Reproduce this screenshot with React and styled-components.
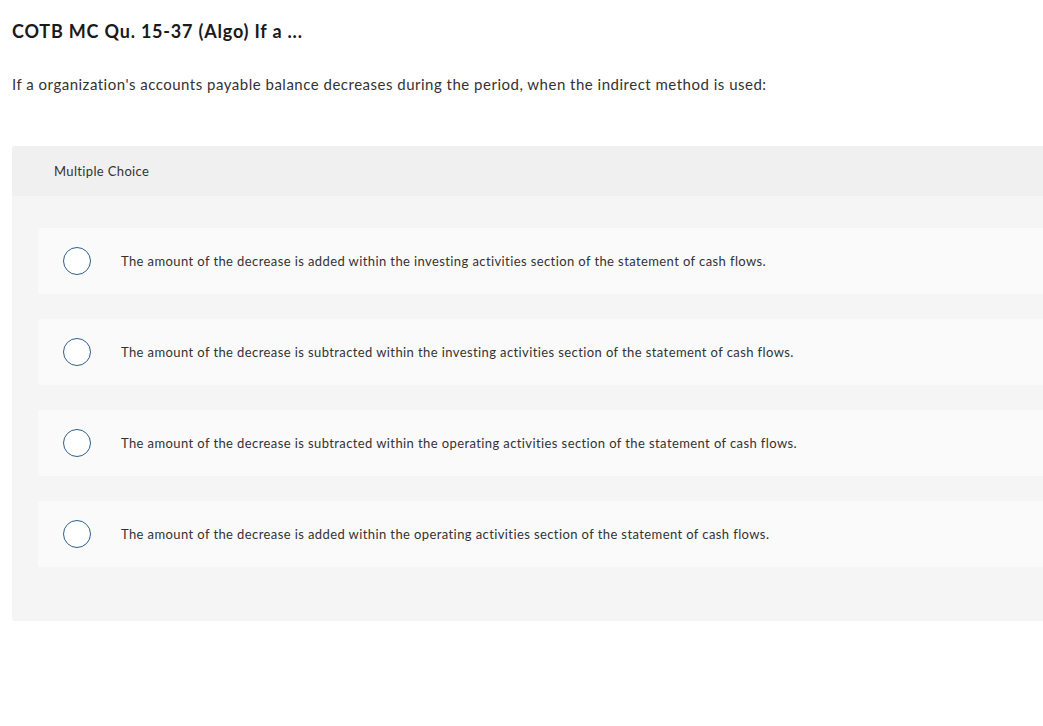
import React from "react"
import styled, { createGlobalStyle } from "styled-components"

const GlobalStyle = createGlobalStyle`
  html, body {
    margin: 0;
    padding: 0;
    background: #ffffff;
    font-family: Lato, "Open Sans", sans-serif;
    color: #333333;
    overflow: hidden;
  }
`

const Page = styled.div`
  display: flex;
  flex-direction: column;
  width: 1043px;
  padding-top: 19px;
`

const Title = styled.h1`
  margin: 0 0 0 12px;
  font-size: 18px;
  line-height: 24px;
  font-weight: 700;
  letter-spacing: 0.8px;
  color: #1a1a1a;
`

const Prompt = styled.p`
  margin: 29px 0 0 12px;
  font-size: 15px;
  line-height: 24px;
  letter-spacing: 0.5px;
  color: #333333;
`

const Panel = styled.section`
  display: flex;
  flex-direction: column;
  margin: 50px 0 0 12px;
  background: #f5f5f5;
  border-radius: 3px 0 0 3px;
  padding-bottom: 54px;
`

const PanelHeader = styled.div`
  display: flex;
  align-items: center;
  height: 50px;
  padding-left: 42px;
  background: #f0f0f0;
  font-size: 13px;
  letter-spacing: 0.35px;
  color: #333333;
  border-radius: 3px 0 0 0;
`

const Choices = styled.div`
  display: flex;
  flex-direction: column;
  gap: 25px;
  padding: 32px 0 0 26px;
`

const Choice = styled.label`
  display: flex;
  align-items: center;
  height: 66px;
  background: #fafafa;
  border-radius: 3px 0 0 3px;
  cursor: pointer;
`

const Radio = styled.span`
  flex: none;
  box-sizing: border-box;
  width: 28px;
  height: 28px;
  margin-left: 25px;
  border-radius: 50%;
  border: 1.5px solid #2e5f8e;
  background: #ffffff;
`

const ChoiceText = styled.span`
  margin-left: 30px;
  font-size: 13px;
  letter-spacing: 0.4px;
  color: #333333;
`

const options = [
  "The amount of the decrease is added within the investing activities section of the statement of cash flows.",
  "The amount of the decrease is subtracted within the investing activities section of the statement of cash flows.",
  "The amount of the decrease is subtracted within the operating activities section of the statement of cash flows.",
  "The amount of the decrease is added within the operating activities section of the statement of cash flows.",
]

export default function App() {
  return (
    <>
      <GlobalStyle />
      <Page>
        <Title>COTB MC Qu. 15-37 (Algo) If a ...</Title>
        <Prompt>
          If a organization's accounts payable balance decreases during the period, when the indirect method is used:
        </Prompt>
        <Panel>
          <PanelHeader>Multiple Choice</PanelHeader>
          <Choices>
            {options.map((text) => (
              <Choice key={text}>
                <Radio />
                <ChoiceText>{text}</ChoiceText>
              </Choice>
            ))}
          </Choices>
        </Panel>
      </Page>
    </>
  )
}
